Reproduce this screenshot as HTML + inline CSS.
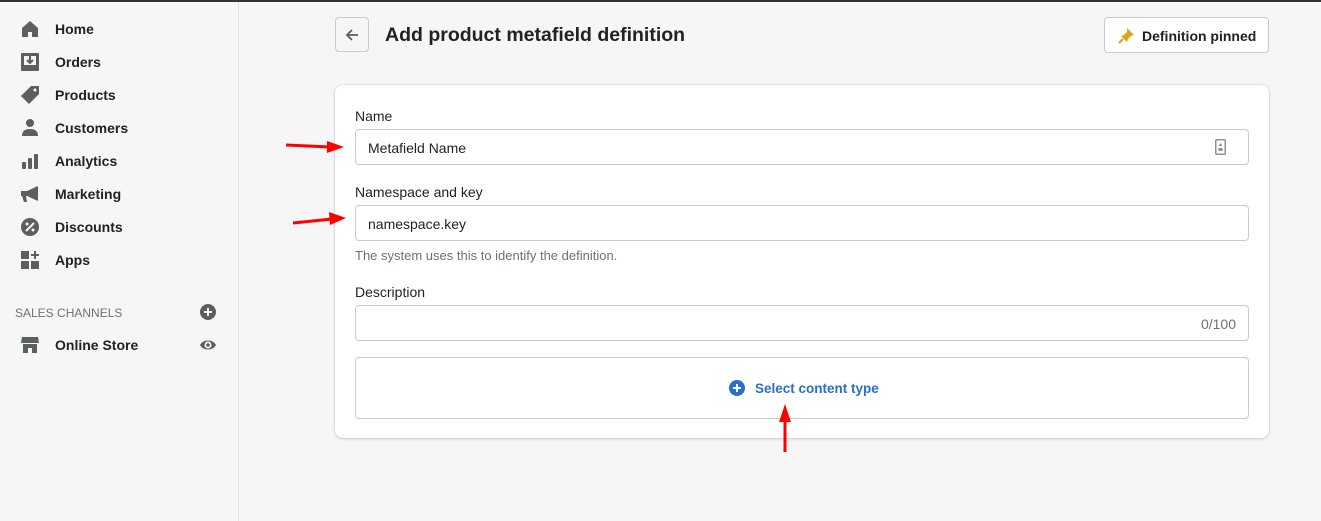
<!DOCTYPE html>
<html><head><meta charset="utf-8"><style>
*{box-sizing:border-box;margin:0;padding:0}
body{width:1321px;height:521px;background:#f6f6f7;font-family:"Liberation Sans",sans-serif;color:#202223;position:relative;overflow:hidden}
.top{position:absolute;left:0;top:0;width:1321px;height:2px;background:#333}
.side{position:absolute;left:0;top:2px;width:239px;height:519px;border-right:1px solid #e1e3e5;background:#f6f6f7}
.nav{position:absolute;left:20px;font-size:14px;font-weight:600;color:#202223}
.nav span{position:absolute;left:35px;top:0;white-space:nowrap}
.nav svg{position:absolute;left:0;top:-2px}
.abs{position:absolute}
.lbl{position:absolute;left:355px;font-size:14px;color:#202223}
.inp{position:absolute;left:355px;width:894px;height:36px;border:1px solid #c9cccf;border-radius:4px;background:#fff;font-size:14px;padding:10px 12px}
</style></head><body>
<div class="top"></div>
<div class="side"></div>
<div class="nav" style="top:21px"><svg width="20" height="20" viewBox="0 0 20 20"><path d="M2 9L10 2l8 7v9h-6v-5H8v5H2z" fill="#5c5f62"/></svg><span>Home</span></div>
<div class="nav" style="top:54px"><svg width="20" height="20" viewBox="0 0 20 20"><rect x="1" y="1" width="18" height="18" rx="1" fill="#5c5f62"/><rect x="4" y="4" width="12" height="9" fill="#f6f6f7"/><path d="M10 4v7M7 8l3 3 3-3" stroke="#5c5f62" stroke-width="2" fill="none"/></svg><span>Orders</span></div>
<div class="nav" style="top:87px"><svg width="20" height="20" viewBox="0 0 20 20"><path d="M11 1h8v8L9 19 1 11z" fill="#5c5f62"/><circle cx="15" cy="5" r="1.5" fill="#f6f6f7"/></svg><span>Products</span></div>
<div class="nav" style="top:120px"><svg width="20" height="20" viewBox="0 0 20 20"><circle cx="10" cy="5" r="4" fill="#5c5f62"/><path d="M2 18c0-5 3-7 8-7s8 2 8 7z" fill="#5c5f62"/></svg><span>Customers</span></div>
<div class="nav" style="top:153px"><svg width="20" height="20" viewBox="0 0 20 20"><rect x="2" y="11" width="4" height="7" rx="1" fill="#5c5f62"/><rect x="8" y="7" width="4" height="11" rx="1" fill="#5c5f62"/><rect x="14" y="3" width="4" height="15" rx="1" fill="#5c5f62"/></svg><span>Analytics</span></div>
<div class="nav" style="top:186px"><svg width="20" height="20" viewBox="0 0 20 20"><path d="M1 7h6l11-5v15L7 12H6l1 6H4l-2-6H1z" fill="#5c5f62"/></svg><span>Marketing</span></div>
<div class="nav" style="top:219px"><svg width="20" height="20" viewBox="0 0 20 20"><circle cx="10" cy="10" r="9" fill="#5c5f62"/><path d="M6 14L14 6" stroke="#f6f6f7" stroke-width="2"/><circle cx="7" cy="7" r="1.5" fill="#f6f6f7"/><circle cx="13" cy="13" r="1.5" fill="#f6f6f7"/></svg><span>Discounts</span></div>
<div class="nav" style="top:252px"><svg width="20" height="20" viewBox="0 0 20 20"><rect x="1" y="1" width="8" height="8" fill="#5c5f62"/><rect x="1" y="11" width="8" height="8" fill="#5c5f62"/><rect x="11" y="11" width="8" height="8" fill="#5c5f62"/><path d="M15 1v8M11 5h8" stroke="#5c5f62" stroke-width="2"/></svg><span>Apps</span></div>
<div class="abs" style="left:15px;top:306px;font-size:12px;color:#6d7175">SALES CHANNELS</div>
<svg class="abs" style="left:200px;top:304px" width="16" height="16" viewBox="0 0 16 16"><circle cx="8" cy="8" r="8" fill="#5c5f62"/><path d="M8 4v8M4 8h8" stroke="#fff" stroke-width="2"/></svg>
<div class="nav" style="top:337px"><svg width="20" height="20" viewBox="0 0 20 20"><path d="M2 2h16l1 6H1z" fill="#5c5f62"/><path d="M3 9h14v9h-5v-5H8v5H3z" fill="#5c5f62"/></svg><span>Online Store</span></div>
<svg class="abs" style="left:199px;top:338px" width="18" height="14" viewBox="0 0 18 14"><path d="M1 7C4 1 14 1 17 7 14 13 4 13 1 7z" fill="#5c5f62"/><circle cx="9" cy="7" r="3.5" fill="#f6f6f7"/><circle cx="9" cy="7" r="1.8" fill="#5c5f62"/></svg>

<div class="abs" style="left:335px;top:17px;width:34px;height:35px;border:1px solid #c9cccf;border-radius:4px;background:#f6f6f7"><svg style="position:absolute;left:8px;top:9px" width="16" height="16" viewBox="0 0 16 16"><path d="M14 8H3M8 3L3 8l5 5" stroke="#5c5f62" stroke-width="1.8" fill="none"/></svg></div>
<div class="abs" style="left:385px;top:24px;font-size:19.5px;font-weight:bold;color:#202223">Add product metafield definition</div>
<div class="abs" style="left:1104px;top:17px;width:165px;height:36px;border:1px solid #c9cccf;border-radius:4px;background:#fff;font-size:14px;font-weight:bold;padding:10px 0 0 37px">Definition pinned</div>
<svg class="abs" style="left:1118px;top:27px" width="17" height="17" viewBox="0 0 17 17"><path d="M9 1l7 7-3 1-3 3-1 3-6-6 3-1 3-3z" fill="#e3a118"/><path d="M5 12L1 16" stroke="#e3a118" stroke-width="2.2"/></svg>

<div class="abs" style="left:335px;top:85px;width:934px;height:353px;background:#fff;border-radius:8px;box-shadow:0 0 0 1px rgba(63,63,68,.05),0 1px 3px rgba(63,63,68,.2)"></div>
<div class="lbl" style="top:108px">Name</div>
<div class="inp" style="top:129px">Metafield Name</div>
<svg class="abs" style="left:1215px;top:139px" width="11" height="16" viewBox="0 0 11 16"><rect x=".75" y=".75" width="9.5" height="14.5" rx="1" fill="none" stroke="#8c9196" stroke-width="1.5"/><path d="M5.5 4l2 3h-4z M3.5 9h4v3h-4z" fill="#8c9196"/></svg>
<div class="lbl" style="top:184px">Namespace and key</div>
<div class="inp" style="top:205px">namespace.key</div>
<div class="lbl" style="top:248px;font-size:13px;color:#6d7175">The system uses this to identify the definition.</div>
<div class="lbl" style="top:284px">Description</div>
<div class="inp" style="top:305px;text-align:right;color:#6d7175">0/100</div>
<div class="abs" style="left:355px;top:357px;width:894px;height:62px;border:1px solid #c9cccf;border-radius:4px;background:#fff"></div>
<svg class="abs" style="left:729px;top:380px" width="16" height="16" viewBox="0 0 16 16"><circle cx="8" cy="8" r="8" fill="#2c6ecb"/><path d="M8 4v8M4 8h8" stroke="#fff" stroke-width="2"/></svg>
<div class="abs" style="left:755px;top:381px;font-size:13.5px;font-weight:bold;color:#2c6ecb">Select content type</div>

<svg class="abs" style="left:0;top:0" width="1321" height="521">
<path d="M286 145L330 147" stroke="#f00" stroke-width="3"/><path d="M344 147L327 141v12z" fill="#f00"/>
<path d="M293 223L332 219" stroke="#f00" stroke-width="3"/><path d="M346 218L329 212l1 13z" fill="#f00"/>
<path d="M785 452V420" stroke="#f00" stroke-width="3"/><path d="M785 404l-6 18h12z" fill="#f00"/>
</svg>
</body></html>
